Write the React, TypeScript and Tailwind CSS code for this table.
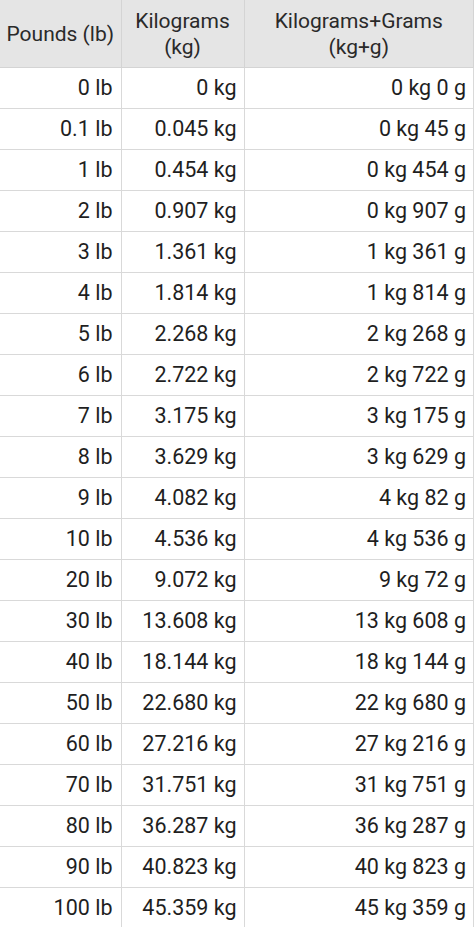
const rows: [string, string, string][] = [
  ["0 lb", "0 kg", "0 kg 0 g"],
  ["0.1 lb", "0.045 kg", "0 kg 45 g"],
  ["1 lb", "0.454 kg", "0 kg 454 g"],
  ["2 lb", "0.907 kg", "0 kg 907 g"],
  ["3 lb", "1.361 kg", "1 kg 361 g"],
  ["4 lb", "1.814 kg", "1 kg 814 g"],
  ["5 lb", "2.268 kg", "2 kg 268 g"],
  ["6 lb", "2.722 kg", "2 kg 722 g"],
  ["7 lb", "3.175 kg", "3 kg 175 g"],
  ["8 lb", "3.629 kg", "3 kg 629 g"],
  ["9 lb", "4.082 kg", "4 kg 82 g"],
  ["10 lb", "4.536 kg", "4 kg 536 g"],
  ["20 lb", "9.072 kg", "9 kg 72 g"],
  ["30 lb", "13.608 kg", "13 kg 608 g"],
  ["40 lb", "18.144 kg", "18 kg 144 g"],
  ["50 lb", "22.680 kg", "22 kg 680 g"],
  ["60 lb", "27.216 kg", "27 kg 216 g"],
  ["70 lb", "31.751 kg", "31 kg 751 g"],
  ["80 lb", "36.287 kg", "36 kg 287 g"],
  ["90 lb", "40.823 kg", "40 kg 823 g"],
  ["100 lb", "45.359 kg", "45 kg 359 g"],
];

export default function App() {
  return (
    <div className="w-[474px] h-[927px] overflow-hidden bg-white font-['Roboto',sans-serif] text-[21.5px] text-[#1f1f1f]">
      <table className="w-full table-fixed border-collapse">
        <colgroup>
          <col className="w-[121px]" />
          <col className="w-[123px]" />
          <col />
        </colgroup>
        <thead>
          <tr className="h-[67px] bg-[#e5e5e5] text-[#2a2a2a]">
            <th className="border-r border-b border-[#d4d4d4] px-0 pt-[2px] font-normal text-[21px] leading-[26px] text-center">
              Pounds (lb)
            </th>
            <th className="border-r border-b border-[#d4d4d4] px-0 pt-[2px] font-normal text-[21px] leading-[26px] text-center">
              Kilograms
              <br />
              (kg)
            </th>
            <th className="border-r border-b border-[#d4d4d4] px-0 pt-[2px] font-normal text-[21px] leading-[26px] text-center">
              Kilograms+Grams
              <br />
              (kg+g)
            </th>
          </tr>
        </thead>
        <tbody>
          {rows.map(([lb, kg, kgg]) => (
            <tr key={lb} className="h-[41px]">
              <td className="border-r border-b border-[#d9d9d9] pr-[8px] pt-[1px] text-right leading-none">{lb}</td>
              <td className="border-r border-b border-[#d9d9d9] pr-[7px] pt-[1px] text-right leading-none">{kg}</td>
              <td className="border-r border-b border-[#d9d9d9] pr-[7px] pt-[1px] text-right leading-none">{kgg}</td>
            </tr>
          ))}
        </tbody>
      </table>
    </div>
  );
}
